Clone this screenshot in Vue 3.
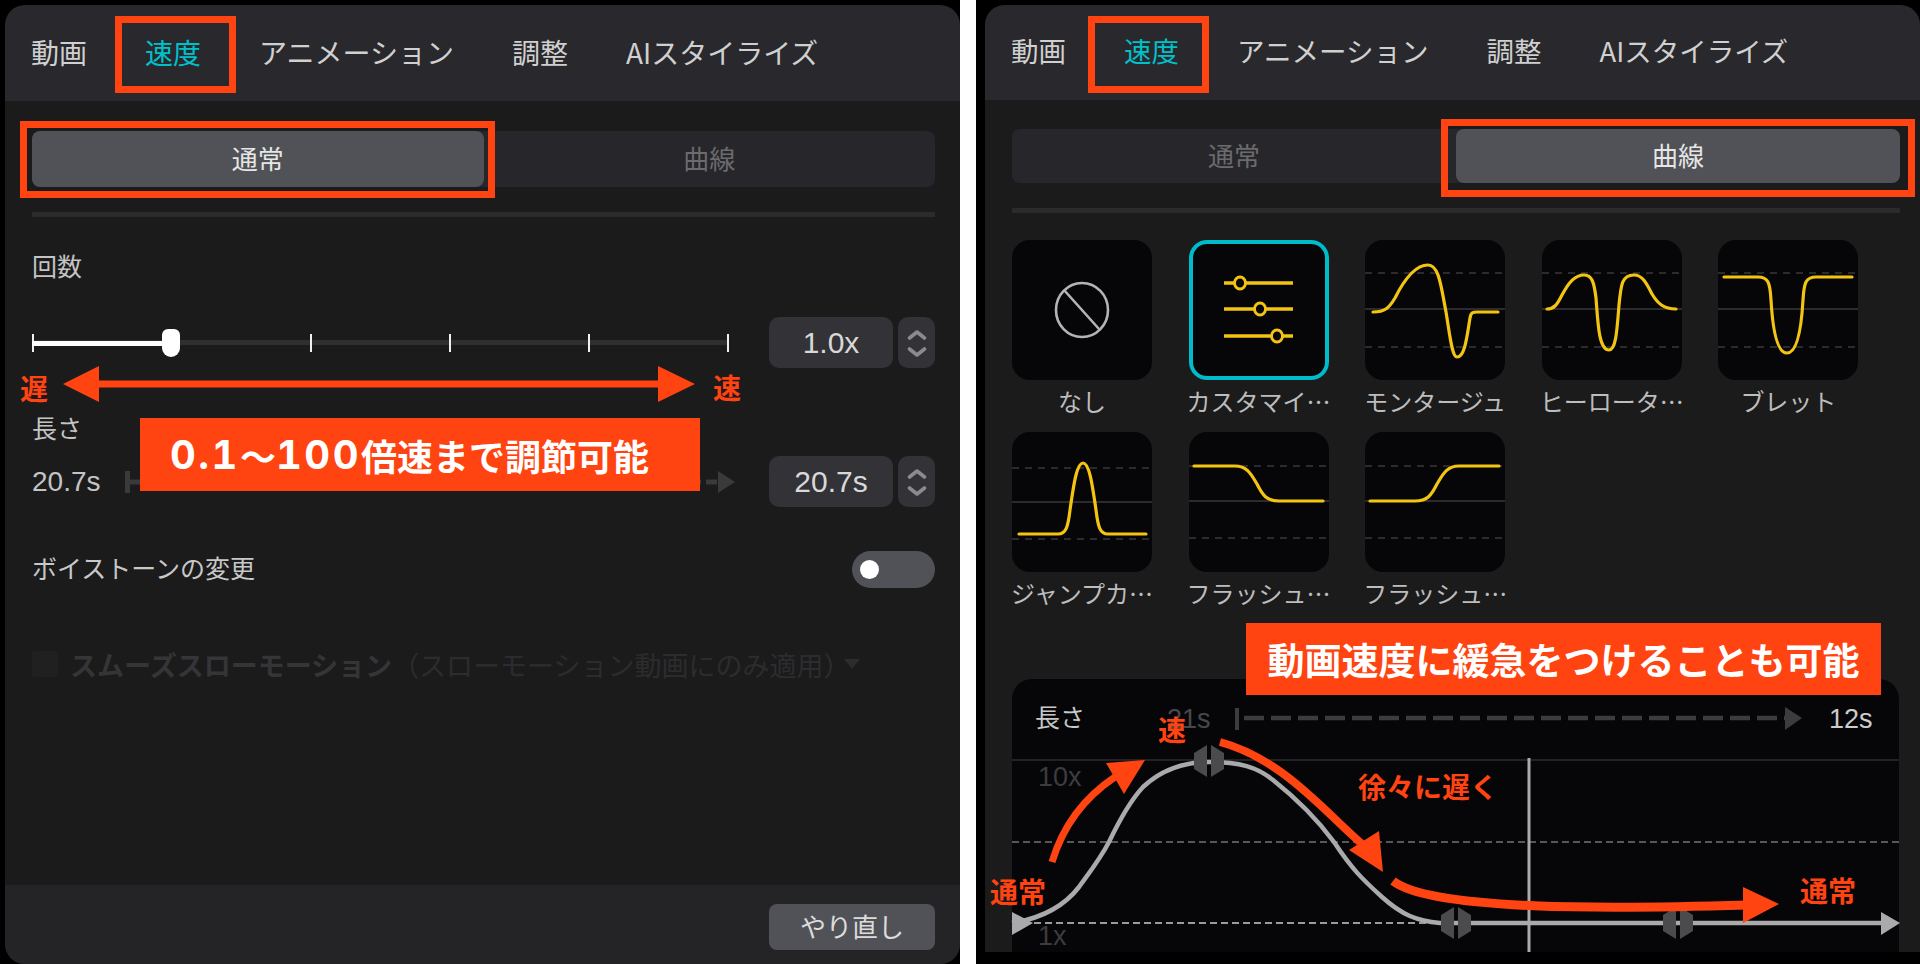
<script setup>
import { ref } from 'vue';

const tabs = ['動画', '速度', 'アニメーション', '調整', 'AIスタイライズ'];
const activeTab = ref('速度');
const sliderPos = ref(20);

// curve presets, midY/dashY are the helper lines behind the yellow curve
const presets = [
    { label: 'なし', kind: 'none' },
    { label: 'カスタマイ…', kind: 'custom' },
    { label: 'モンタージュ', midY: 69, dashY: [33, 107], d: 'M8 72 C20 72 24 68 30 58 C38 42 50 25 63 25 C74 25 76 46 81 72 C85 96 87 117 92 117 C100 117 102 96 105 78 C106 72 108 72 112 72 L133 72' },
    { label: 'ヒーロータ…', midY: 69, dashY: [33, 107], d: 'M5 69 C12 69 15 65 20 55 C27 42 33 35 42 35 C50 35 52 42 54 58 C56 85 57 110 67 110 C74 110 75 90 77 65 C79 44 80 35 92 35 C100 35 104 42 110 54 C116 64 122 69 134 69' },
    { label: 'ブレット', midY: 69, dashY: [33, 107], d: 'M6 37 L40 37 C50 37 52 42 53 60 C55 95 60 113 69 113 C78 113 83 95 85 60 C86 42 88 37 98 37 L134 37' },
    { label: 'ジャンプカ…', midY: 70, dashY: [36, 107], d: 'M7 102 L46 102 C54 102 56 95 58 78 C62 50 65 31 71 31 C77 31 80 50 84 78 C86 95 88 102 96 102 L134 102' },
    { label: 'フラッシュ…', midY: 69, dashY: [34, 106], d: 'M5 34 L46 34 C58 34 62 42 68 52 C74 64 78 69 90 69 L134 69' },
    { label: 'フラッシュ…', midY: 69, dashY: [34, 106], d: 'M5 69 L50 69 C62 69 66 64 72 52 C78 42 82 34 94 34 L134 34' },
];

const sliders = [
    { y: 43, x: 51 },
    { y: 69, x: 71 },
    { y: 96, x: 88 },
];

// keyframe handles on the graph
const handles = [
    { x: 197, y: 82 },
    { x: 444, y: 244 },
    { x: 666, y: 244 },
];
const handlePoints = (h, side) => {
    const a = h.x + side * 2;
    const b = h.x + side * 15;
    return `${a},${h.y - 16} ${a},${h.y + 16} ${b},${h.y + 8} ${b},${h.y - 8}`;
};
</script>

<template>
    <div class="page">
        <!-- left: normal speed -->
        <section class="panel panel-left">
            <header class="tabs">
                <span v-for="t in tabs" :key="t" class="tab" :class="{ active: t === activeTab }">{{ t }}</span>
            </header>

            <div class="body">
                <div class="segment">
                    <div class="seg on">通常</div>
                    <div class="seg">曲線</div>
                </div>
                <div class="divider"></div>

                <div class="label first">回数</div>
                <div class="row">
                    <div class="slider">
                        <div class="ticks">
                            <i v-for="n in 6" :key="n"></i>
                        </div>
                        <div class="fill" :style="{ width: sliderPos + '%' }"></div>
                        <div class="thumb" :style="{ left: sliderPos + '%' }"></div>
                    </div>
                    <div class="numbox">1.0x</div>
                    <div class="stepper">
                        <svg width="20" height="36" viewBox="0 0 20 36" fill="none" stroke="#8b8b8e" stroke-width="3.6" stroke-linecap="round" stroke-linejoin="round">
                            <path d="M2.5 13 L10 7 L17.5 13" />
                            <path d="M2.5 24 L10 30 L17.5 24" />
                        </svg>
                    </div>
                </div>

                <div class="label second">長さ</div>
                <div class="row">
                    <div class="time">20.7s</div>
                    <svg class="duration" width="610" height="24" viewBox="0 0 610 24">
                        <rect x="0" y="1" width="5" height="22" fill="#3a3a3c" />
                        <line x1="5" y1="12" x2="594" y2="12" stroke="#3a3a3c" stroke-width="5" stroke-dasharray="11 5" />
                        <path d="M593 1 L610 12 L593 23 Z" fill="#3a3a3c" />
                    </svg>
                    <div class="numbox">20.7s</div>
                    <div class="stepper">
                        <svg width="20" height="36" viewBox="0 0 20 36" fill="none" stroke="#8b8b8e" stroke-width="3.6" stroke-linecap="round" stroke-linejoin="round">
                            <path d="M2.5 13 L10 7 L17.5 13" />
                            <path d="M2.5 24 L10 30 L17.5 24" />
                        </svg>
                    </div>
                </div>

                <div class="toggle-row">
                    <span class="toggle-text">ボイストーンの変更</span>
                    <div class="toggle"><span></span></div>
                </div>

                <div class="smooth-row">
                    <span class="check"></span>
                    <b>スムーズスローモーション</b>
                    <span class="smooth-note">（スローモーション動画にのみ適用）</span>
                    <span class="caret"></span>
                </div>
            </div>

            <footer class="foot">
                <button class="reset">やり直し</button>
            </footer>

            <!-- annotations laid over the screenshot -->
            <div class="mark mark-tab-l"></div>
            <div class="mark mark-seg-l"></div>
            <svg class="range-arrow" width="632" height="36" viewBox="0 0 632 36">
                <path d="M0 18 L36 0 L36 14.5 L595 14.5 L595 0 L632 18 L595 36 L595 21.5 L36 21.5 L36 36 Z" fill="#ff4311" />
            </svg>
            <span class="note note-slow">遅</span>
            <span class="note note-fast">速</span>
            <div class="callout callout-l"><span class="num">0.1</span>〜<span class="num">100</span>倍速まで調節可能</div>
        </section>

        <div class="gap"></div>

        <!-- right: curve speed -->
        <section class="panel panel-right">
            <header class="tabs">
                <span v-for="t in tabs" :key="t" class="tab" :class="{ active: t === activeTab }">{{ t }}</span>
            </header>

            <div class="body">
                <div class="segment">
                    <div class="seg">通常</div>
                    <div class="seg on">曲線</div>
                </div>
                <div class="divider"></div>

                <div class="presets">
                    <div v-for="(p, i) in presets" :key="i" class="preset">
                        <div class="thumbnail" :class="{ selected: p.kind === 'custom' }">
                            <svg width="140" height="140" viewBox="0 0 140 140" fill="none">
                                <template v-if="p.kind === 'none'">
                                    <ellipse cx="70" cy="70" rx="26" ry="27" stroke="#b4b4b6" stroke-width="2.6" />
                                    <line x1="52" y1="50" x2="87" y2="89" stroke="#b4b4b6" stroke-width="2.6" />
                                </template>
                                <template v-else-if="p.kind === 'custom'">
                                    <g v-for="s in sliders" :key="s.y">
                                        <line x1="35" :y1="s.y" x2="104" :y2="s.y" stroke="#f3c512" stroke-width="3.4" />
                                        <ellipse :cx="s.x" :cy="s.y" rx="5.5" ry="6" fill="#060608" stroke="#f3c512" stroke-width="2.8" />
                                    </g>
                                </template>
                                <template v-else>
                                    <line v-for="y in p.dashY" :key="y" x1="0" :y1="y" x2="140" :y2="y" stroke="#39393b" stroke-width="1.6" stroke-dasharray="7 6" />
                                    <line x1="0" :y1="p.midY" x2="140" :y2="p.midY" stroke="#39393b" stroke-width="1.6" />
                                    <path :d="p.d" stroke="#f3c512" stroke-width="3.2" stroke-linecap="round" />
                                </template>
                            </svg>
                        </div>
                        <span class="preset-name">{{ p.label }}</span>
                    </div>
                </div>

                <div class="graph">
                    <svg width="887" height="273" viewBox="0 0 887 273" fill="none">
                        <text class="g-label" x="23" y="48">長さ</text>
                        <text class="g-num" x="155" y="49" fill="#48484b">21s</text>
                        <rect x="223" y="29" width="4" height="22" fill="#3c3c3e" />
                        <line x1="232" y1="39" x2="775" y2="39" stroke="#3c3c3e" stroke-width="4.5" stroke-dasharray="20 7" />
                        <path d="M773 28 L790 39 L773 51 Z" fill="#3c3c3e" />
                        <text class="g-num" x="817" y="49" fill="#cccccc">12s</text>

                        <line x1="0" y1="81" x2="887" y2="81" stroke="#222224" stroke-width="2" />
                        <text class="g-num" x="26" y="107" fill="#3c3c3e">10x</text>
                        <line x1="0" y1="163" x2="887" y2="163" stroke="#58585a" stroke-width="2" stroke-dasharray="7 4" />
                        <line x1="0" y1="244" x2="430" y2="244" stroke="#9a9a9c" stroke-width="2" stroke-dasharray="7 4" />
                        <text class="g-num" x="26" y="266" fill="#3c3c3e">1x</text>

                        <line x1="517" y1="79" x2="517" y2="273" stroke="#aaaaac" stroke-width="3" />
                        <path d="M0 244 C25 240 50 230 67 208 C80 190 88 180 97 163 C108 140 118 122 131 108 C145 95 165 83 197 83 C228 83 245 88 261 101 C285 120 305 140 322 163 C340 190 350 200 370 218 C390 236 405 242 428 244 L872 244" stroke="#aaaaac" stroke-width="4.5" />
                        <path d="M0 233 L21 244 L0 256 Z" fill="#aaaaac" />
                        <path d="M869 233 L888 244 L869 256 Z" fill="#aaaaac" />

                        <g v-for="h in handles" :key="h.x">
                            <polygon :points="handlePoints(h, -1)" fill="#4b4b4e" />
                            <polygon :points="handlePoints(h, 1)" fill="#4b4b4e" />
                        </g>

                        <!-- orange annotation arrows -->
                        <path d="M40 183 C50 150 70 120 103 98" stroke="#ff4311" stroke-width="7" />
                        <path d="M94 84 L133 81 L112 115 Z" fill="#ff4311" />
                        <path d="M208 63 C270 80 310 130 350 165" stroke="#ff4311" stroke-width="8" />
                        <path d="M337 171 L367 152 L371 193 Z" fill="#ff4311" />
                        <path d="M381 202 C420 232 600 230 735 226" stroke="#ff4311" stroke-width="9" />
                        <path d="M731 208 L767 225 L731 244 Z" fill="#ff4311" />
                        <text class="g-note" x="146" y="62">速</text>
                        <text class="g-note" x="346" y="119">徐々に遅く</text>
                        <text class="g-note" x="-22" y="224">通常</text>
                        <text class="g-note" x="788" y="223">通常</text>
                    </svg>
                </div>
            </div>

            <div class="mark mark-tab-r"></div>
            <div class="mark mark-seg-r"></div>
            <div class="callout callout-r">動画速度に緩急をつけることも可能</div>
        </section>
    </div>
</template>

<style>
html, body {
    margin: 0;
    background: #000;
}
</style>

<style scoped>
.page {
    display: flex;
    width: 1920px;
    height: 964px;
    overflow: hidden;
    background: #000;
    font-family: "Noto Sans CJK JP", "Noto Sans", sans-serif;
    color: #d0d0d0;
}

.panel {
    position: relative;
    display: flex;
    flex-direction: column;
    box-sizing: border-box;
    margin-top: 5px;
    background: #1b1b1c;
    border-radius: 20px 20px 0 0;
}

.panel-left {
    width: 955px;
    height: 959px;
    margin-left: 5px;
    border-radius: 20px;
    overflow: hidden;
}

.panel-right {
    width: 935px;
    height: 947px;
    margin-left: 9px;
}

.gap {
    width: 16px;
    height: 964px;
    margin-top: 0;
    background: #fff;
}

/* tabs */
.tabs {
    display: flex;
    align-items: center;
    flex-shrink: 0;
    height: 96px;
    padding: 0 0 3px 26px;
    box-sizing: border-box;
    gap: 58px;
    background: #28282d;
    border-radius: 20px 20px 0 0;
    font-size: 28px;
    line-height: 1;
    white-space: nowrap;
}

.panel-right .tabs {
    height: 95px;
    font-size: 27.5px;
}

.tab.active {
    color: #00c1c9;
}

.body {
    display: flex;
    flex-direction: column;
    flex: 1;
    padding: 30px 25px 0 27px;
}

.panel-right .body {
    padding: 29px 20px 0 27px;
}

.segment {
    display: grid;
    grid-template-columns: 1fr 1fr;
    height: 56px;
    background: #27272b;
    border-radius: 8px;
    font-size: 26px;
    color: #6b6b6e;
}

.panel-right .segment {
    height: 54px;
}

.seg {
    display: flex;
    align-items: center;
    justify-content: center;
    padding-bottom: 3px;
    box-sizing: border-box;
    border-radius: 8px;
}

.seg.on {
    background: #515257;
    color: #e6e6e6;
}

.divider {
    height: 5px;
    margin-top: 25px;
    background: #2b2b2e;
}

.label {
    font-size: 25px;
    line-height: 36px;
    color: #c4c4c4;
}

.label.first {
    margin-top: 30px;
    margin-bottom: 34px;
}

.label.second {
    margin-top: 41px;
    margin-bottom: 11px;
}

.row {
    display: flex;
    align-items: center;
    height: 51px;
}

/* slider */
.slider {
    position: relative;
    width: 697px;
    height: 42px;
    margin-right: 40px;
}

.ticks {
    display: flex;
    justify-content: space-between;
    align-items: center;
    height: 100%;
    background: linear-gradient(#2f2f32, #2f2f32) center / 100% 5px no-repeat;
}

.ticks i {
    width: 2px;
    height: 18px;
    background: #f0f0f0;
}

.fill {
    position: absolute;
    left: 0;
    top: 19px;
    height: 5px;
    background: #fff;
}

.thumb {
    position: absolute;
    top: 7px;
    width: 18px;
    height: 28px;
    margin-left: -9px;
    background: #fff;
    border-radius: 6px 6px 9px 9px;
}

.numbox {
    display: flex;
    align-items: center;
    justify-content: center;
    width: 124px;
    height: 51px;
    background: #323237;
    border-radius: 10px;
    font-family: "Liberation Sans", sans-serif;
    font-size: 30px;
    color: #d8d8d8;
}

.stepper {
    display: flex;
    align-items: center;
    justify-content: center;
    width: 37px;
    height: 51px;
    margin-left: 5px;
    background: #323237;
    border-radius: 10px;
}

.time {
    width: 93px;
    font-family: "Liberation Sans", sans-serif;
    font-size: 28px;
    color: #c4c4c4;
}

.duration {
    margin-right: 34px;
}

.toggle-row {
    display: flex;
    align-items: center;
    justify-content: space-between;
    height: 37px;
    margin-top: 44px;
}

.toggle-text {
    padding-bottom: 6px;
    font-size: 25px;
    color: #c8c8c8;
}

.toggle {
    display: flex;
    align-items: center;
    width: 83px;
    height: 37px;
    padding-left: 8px;
    box-sizing: border-box;
    background: #515257;
    border-radius: 19px;
}

.toggle span {
    width: 19px;
    height: 19px;
    background: #fff;
    border-radius: 50%;
}

.smooth-row {
    display: flex;
    align-items: center;
    height: 36px;
    margin-top: 58px;
    font-size: 27px;
    color: #2c2c2e;
    white-space: nowrap;
}

.check {
    width: 26px;
    height: 26px;
    margin-right: 12px;
    background: #202021;
    border-radius: 3px;
}

.smooth-row b {
    color: #353537;
}

.smooth-note {
    font-size: 27px;
}

.caret {
    width: 0;
    height: 0;
    margin-left: -7px;
    border-left: 8px solid transparent;
    border-right: 8px solid transparent;
    border-top: 10px solid #2c2c2e;
}

.foot {
    display: flex;
    justify-content: flex-end;
    flex-shrink: 0;
    height: 79px;
    padding: 19px 25px 0 0;
    box-sizing: border-box;
    background: #242427;
}

.reset {
    width: 166px;
    height: 46px;
    padding: 0 0 3px;
    border: none;
    border-radius: 8px;
    background: #515257;
    color: #dcdcdc;
    font-family: inherit;
    font-size: 26px;
}

/* presets */
.presets {
    display: grid;
    grid-template-columns: repeat(5, 140px);
    column-gap: 36.6px;
    row-gap: 8px;
    margin-top: 27px;
}

.preset {
    display: flex;
    flex-direction: column;
    align-items: center;
    width: 140px;
}

.thumbnail {
    width: 140px;
    height: 140px;
    box-sizing: border-box;
    background: #060608;
    border-radius: 18px;
    overflow: hidden;
}

.thumbnail svg {
    display: block;
}

.thumbnail.selected {
    box-shadow: inset 0 0 0 4px #00bccb;
}

.preset-name {
    height: 44px;
    font-size: 24px;
    line-height: 41px;
    color: #bdbdbd;
    white-space: nowrap;
}

/* graph */
.graph {
    width: 887px;
    height: 273px;
    margin-top: 63px;
    background: #060608;
    border-radius: 20px 20px 0 0;
}

.graph svg {
    display: block;
    overflow: visible;
}

.g-label {
    font-size: 25px;
    fill: #c8c8c8;
}

.g-num {
    font-family: "Liberation Sans", sans-serif;
    font-size: 27px;
}

.g-note {
    font-size: 28px;
    font-weight: 700;
    fill: #ff4311;
}

/* annotations */
.mark {
    position: absolute;
    box-sizing: border-box;
    border: 7px solid #ff4311;
}

.mark-tab-l {
    left: 110px;
    top: 11px;
    width: 121px;
    height: 77px;
}

.mark-seg-l {
    left: 15px;
    top: 116px;
    width: 475px;
    height: 77px;
}

.mark-tab-r {
    left: 103px;
    top: 11px;
    width: 121px;
    height: 77px;
}

.mark-seg-r {
    left: 456px;
    top: 114px;
    width: 474px;
    height: 78px;
}

.range-arrow {
    position: absolute;
    left: 58px;
    top: 361px;
}

.note {
    position: absolute;
    font-size: 28px;
    font-weight: 700;
    line-height: 28px;
    color: #ff4311;
}

.note-slow {
    left: 15px;
    top: 369px;
}

.note-fast {
    left: 708px;
    top: 368px;
}

.callout {
    position: absolute;
    display: flex;
    align-items: center;
    justify-content: center;
    background: #ff4311;
    color: #fff;
    font-weight: 700;
    white-space: nowrap;
}

.callout-l {
    left: 135px;
    top: 413px;
    width: 560px;
    height: 73px;
    justify-content: flex-start;
    padding-left: 30px;
    box-sizing: border-box;
    font-size: 36px;
}

.callout-l .num {
    font-family: Inter, sans-serif;
    font-size: 40px;
    letter-spacing: 2.5px;
    font-variant-numeric: tabular-nums;
}

.callout-r {
    left: 261px;
    top: 618px;
    width: 635px;
    height: 72px;
    font-size: 37px;
}
</style>
